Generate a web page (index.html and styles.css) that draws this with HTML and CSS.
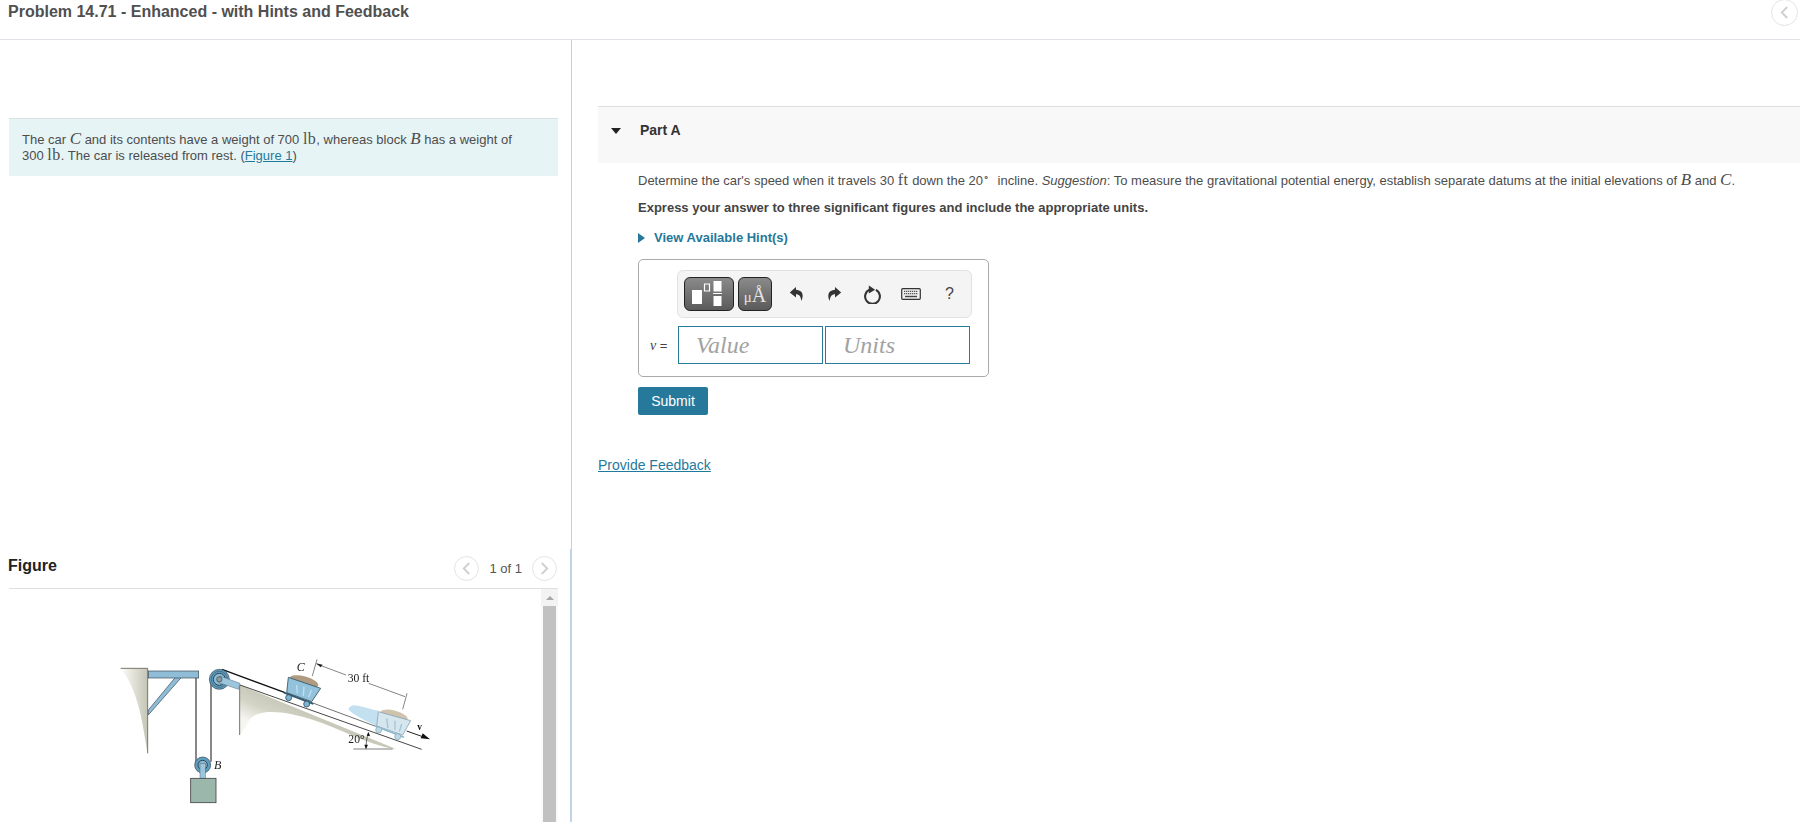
FILE: index.html
```html
<!DOCTYPE html>
<html lang="en">
<head>
<meta charset="utf-8">
<title>Problem 14.71</title>
<link rel="stylesheet" href="styles.css">
</head>
<body>
<header class="topbar">
  <h1 class="title">Problem 14.71 - Enhanced - with Hints and Feedback</h1>
  <span class="circle circle-top"><svg class="chev" viewBox="0 0 12 16"><path d="M9 2 3 8l6 6"/></svg></span>
</header>
<main class="split">
  <section class="left">
    <div class="intro">The car <i class="m">C</i> and its contents have a weight of 700 <span class="u">lb</span>, whereas block <i class="m">B</i> has a weight of<br>300 <span class="u">lb</span>. The car is released from rest. (<a class="link" href="#">Figure 1</a>)</div>
    <div class="fighead">
      <h2 class="figtitle">Figure</h2>
      <div class="pager">
        <span class="circle"><svg class="chev" viewBox="0 0 12 16"><path d="M9 2 3 8l6 6"/></svg></span>
        <span class="pagecount">1 of 1</span>
        <span class="circle"><svg class="chev" viewBox="0 0 12 16"><path d="M3 2l6 6-6 6"/></svg></span>
      </div>
    </div>
    <div class="figbody">
      <div class="figscroll">
        <svg class="diagram" viewBox="0 0 1020 516" width="340" height="172">
          <defs>
            <linearGradient id="wall" x1="0" x2="1" y1="0" y2="0"><stop offset="0" stop-color="#fff"/><stop offset=".45" stop-color="#e4e4da"/><stop offset="1" stop-color="#c4c4b6"/></linearGradient>
            <linearGradient id="ground" gradientUnits="userSpaceOnUse" x1="620" y1="160" x2="570" y2="270"><stop offset="0" stop-color="#c4c4b4"/><stop offset=".55" stop-color="#d2d2c5"/><stop offset="1" stop-color="#f6f6f1"/></linearGradient>
          </defs>
          <path d="M60 55H143V310C128 230 118 120 60 55Z" fill="url(#wall)"/>
          <path d="M62 55H143V310" fill="none" stroke="#77776f" stroke-width="3"/>
          <path d="M420 105 890 298C800 285 720 235 640 210 560 185 470 170 445 215 435 235 428 245 420 255Z" fill="url(#ground)"/>
          <path d="M419 105V255" stroke="#555" stroke-width="2.500"/>
          <path d="M145 180 236 70 248 78 145 195Z" fill="#8fbcd6" stroke="#3b4a55" stroke-width="2"/>
          <rect x="145" y="63" width="151" height="21" fill="#8fbcd6" stroke="#3b4a55" stroke-width="2"/>
          <path d="M288 84V335M333 90V335" stroke="#111" stroke-width="3" fill="none"/>
          <path d="M366 58 555 128" stroke="#111" stroke-width="4"/>
          <path d="M420 105 965 298" stroke="#222" stroke-width="2.500"/>
          <path d="M555 128 835 232" stroke="#555" stroke-width="2.500"/>
          <circle cx="358" cy="88" r="30" fill="#5f9dbf" stroke="#2e4552" stroke-width="2"/>
          <circle cx="358" cy="88" r="24" fill="none" stroke="#2e4552" stroke-width="1.500"/>
          <circle cx="358" cy="88" r="18" fill="#8bbad4" stroke="#2e4552" stroke-width="3"/>
          <path d="M360 78 420 100 416 118 356 98Z" fill="#9cc6dc" stroke="#567" stroke-width="1.500"/>
          <circle cx="358" cy="88" r="8" fill="#8d9aa0" stroke="#2e4552" stroke-width="2"/>
          <path d="M745 178C755 155 775 170 835 182L830 228C800 215 760 195 745 178Z" fill="#c2e0f0"/>
          <ellipse cx="882" cy="197" rx="42" ry="15" fill="#cfc3ae" transform="rotate(15 882 197)"/>
          <path d="M835 185 932 212 908 255 830 228Z" fill="#d6e6ef" stroke="#8aa3b2" stroke-width="2.500"/>
          <path d="M860 205 864 235M885 212 885 240M905 222 898 245" stroke="#a4c4d6" stroke-width="4" fill="none"/>
          <path d="M825 228 912 262" stroke="#8cb7cf" stroke-width="5"/>
          <circle cx="836" cy="240" r="9" fill="#bcd9e8" stroke="#8aa3b2" stroke-width="2"/>
          <circle cx="893" cy="260" r="9" fill="#bcd9e8" stroke="#8aa3b2" stroke-width="2"/>
          <ellipse cx="612" cy="95" rx="44" ry="16" fill="#b09a80" transform="rotate(15 612 95)"/>
          <path d="M565 82 662 115 635 155 560 128Z" fill="#93c2dc" stroke="#33505f" stroke-width="2.500"/>
          <path d="M590 105 592 130M612 110 610 138M634 120 626 142" stroke="#c3dfee" stroke-width="4" fill="none"/>
          <path d="M552 128 640 162" stroke="#2d5a70" stroke-width="5"/>
          <circle cx="566" cy="143" r="9" fill="#7db5d3" stroke="#234" stroke-width="2"/>
          <circle cx="620" cy="162" r="9" fill="#7db5d3" stroke="#234" stroke-width="2"/>
          <path d="M651 28 637 78M650 42 738 75M806 100 915 140M921 130 908 178" stroke="#333" stroke-width="1.800" fill="none"/>
          <path d="M648 40 668 44 662 52Z" fill="#222"/>
          <path d="M920 243 965 259" stroke="#222" stroke-width="3"/>
          <path d="M990 268 962 265 968 250Z" fill="#111"/>
          <path d="M760 297H878" stroke="#666" stroke-width="2.500"/>
          <path d="M805 248C800 265 798 280 798 296" stroke="#222" stroke-width="2" fill="none"/>
          <path d="M798 297 793 284H804ZM806 246 810 259 800 257Z" fill="#111"/>
          <circle cx="308" cy="345" r="24" fill="#5f9dbf" stroke="#2e4552" stroke-width="2"/>
          <circle cx="308" cy="345" r="14" fill="#8bbad4" stroke="#2e4552" stroke-width="3"/>
          <rect x="300" y="340" width="16" height="46" fill="#9cc6dc" stroke="#567" stroke-width="1.500"/>
          <rect x="272" y="385" width="76" height="73" fill="#9bb7ab" stroke="#444" stroke-width="2.500"/>
          <text class="fig-label" x="590" y="63">C</text>
          <text class="fig-label" x="342" y="358">B</text>
          <text class="fig-dim" x="743" y="97">30 ft</text>
          <text class="fig-dim" x="745" y="280">20°</text>
          <text class="fig-vec" x="952" y="241">v</text>
        </svg>
      </div>
      <div class="scrollbar">
        <span class="scroll-up"></span>
        <span class="scroll-thumb"></span>
      </div>
    </div>
  </section>
  <div class="rule"><span class="rule-top"></span><span class="rule-bottom"></span></div>
  <section class="right">
    <div class="parthead"><span class="tri-down"></span><span class="partname">Part A</span></div>
    <div class="partbody">
      <p class="para">Determine the car's speed when it travels 30 <span class="u">ft</span> down the 20<sup class="deg">∘</sup> incline. <em>Suggestion</em>: To measure the gravitational potential energy, establish separate datums at the initial elevations of <i class="m">B</i> and <i class="m">C</i>.</p>
      <p class="para strong">Express your answer to three significant figures and include the appropriate units.</p>
      <div class="hint"><span class="tri-right"></span>View Available Hint(s)</div>
      <div class="answer">
        <div class="toolbar">
          <button class="tbtn tbtn-wide" type="button"><svg width="48" height="32" viewBox="0 0 48 32"><path fill="#fff" d="M7 12h10v14H7zM28.500 3h8v10.500h-8zM28.500 18h8v10h-8z"/><path d="M19.500 6h5v7h-5z" fill="none" stroke="#fff" stroke-width="1.200"/><path d="M28 15.500h9" stroke="#fff" stroke-width="1"/></svg></button>
          <button class="tbtn tbtn-unit" type="button"><span class="mu">μ</span><span class="ang">Å</span></button>
          <svg class="ticon undo" viewBox="0 0 16 16"><path d="M7 1 .8 6.500 7 11.500V8.300c3.300 0 4.800 2 5.300 6.700 2.700-5.300 1.700-10.800-5.300-11.200Z"/></svg>
          <svg class="ticon redo" viewBox="0 0 16 16"><path d="M9 1l6.200 5.500L9 11.500V8.300C5.700 8.300 4.200 10.300 3.700 15 1 9.700 2 4.200 9 3.800Z"/></svg>
          <svg class="ticon reset" viewBox="0 0 18 18"><path class="arc" d="M5.800 4.600a7 7 0 1 0 6.400 0"/><path d="M5.500 0.500 11.500 4.500 5.500 8Z"/></svg>
          <svg class="ticon keys" viewBox="0 0 20 12"><rect x=".7" y=".7" width="18.600" height="10.600" rx="1" fill="#eee" stroke="#333" stroke-width="1.200"/><path d="M3 3.300h14M3 5.600h14" stroke="#555" stroke-width="1.300" stroke-dasharray="1.300 .7"/><path d="M4 8.500h12" stroke="#444" stroke-width="1.400"/></svg>
          <span class="help">?</span>
        </div>
        <div class="inputs">
          <span class="varlabel"><i class="m">v</i> =</span>
          <span class="field">Value</span>
          <span class="field">Units</span>
        </div>
      </div>
      <button class="submit" type="button">Submit</button>
    </div>
    <a class="link feedback" href="#">Provide Feedback</a>
  </section>
</main>
</body>
</html>
```
FILE: styles.css
```css
* { box-sizing: border-box; }
html, body { margin: 0; height: 822px; overflow: hidden; background: #fff; }
body { font-family: "Liberation Sans", Arial, sans-serif; font-size: 13px; color: #4a4a4a; display: flex; flex-direction: column; }

.topbar { height: 40px; flex: none; border-bottom: 1px solid #dfe2e6; padding-left: 8px; display: flex; justify-content: space-between; align-items: flex-start; }
.title { margin: 3px 0 0; font-size: 16px; line-height: 18px; font-weight: 700; color: #505050; }

.circle { width: 25px; height: 25px; border-radius: 50%; border: 1px solid #e4e4e4; display: flex; align-items: center; justify-content: center; background: #fff; flex: none; }
.circle-top { width: 27px; height: 27px; margin: 0 2px 0 0; transform: translateY(-1px); }
.chev { width: 11px; height: 15px; fill: none; stroke: #cfcfcf; stroke-width: 2; }

.split { flex: 1; min-height: 0; display: flex; }
.left { width: 570px; flex: none; display: flex; flex-direction: column; padding: 78px 12px 0 9px; }
.rule { width: 2px; flex: none; display: flex; flex-direction: column; align-items: flex-end; }
.rule-top { width: 1px; height: 509px; background: #c3cfdd; }
.rule-bottom { width: 2px; flex: 1; background: #c3d2e6; }
.right { flex: 1; min-width: 0; padding: 66px 0 0 26px; }

.intro { height: 58px; background: #e6f4f6; border-top: 1px solid #d8e2e6; padding: 13px 10px 0 13px; line-height: 16px; color: #4d4d4d; white-space: nowrap; }
.m { font-family: "Liberation Serif", serif; font-style: italic; font-size: 17px; line-height: 0; }
.u { font-family: "Liberation Serif", serif; font-size: 16px; letter-spacing: .5px; line-height: 0; }
.link { color: #1f7a9c; text-decoration: underline; }

.fighead { height: 413px; flex: none; display: flex; justify-content: space-between; align-items: flex-end; border-bottom: 1px solid #dde0e3; padding-bottom: 7px; }
.figtitle { margin: 0 0 5px; font-size: 16px; line-height: 20px; font-weight: 700; color: #222; transform: translateX(-1px); }
.pager { display: flex; align-items: center; gap: 10px; margin-right: 1px; }
.pagecount { color: #555; font-size: 13px; }

.figbody { flex: 1; min-height: 0; display: flex; }
.figscroll { flex: 1; padding: 61px 0 0 91px; }
.diagram { display: block; filter: blur(.4px); }
.fig-label { font: italic 36px "Liberation Serif", serif; fill: #222; }
.fig-dim { font: 35px "Liberation Serif", serif; fill: #222; }
.fig-vec { font: 700 28px "Liberation Serif", serif; fill: #111; }

.scrollbar { width: 17px; flex: none; display: flex; flex-direction: column; align-items: center; background: #f9f9f9; }
.scroll-up { width: 17px; height: 17px; flex: none; display: flex; align-items: center; justify-content: center; background: #f3f3f3; }
.scroll-up::before { content: ""; border: 4px solid transparent; border-top-width: 0; border-bottom: 4px solid #a8a8a8; }
.scroll-thumb { width: 13px; flex: 1; background: #c1c1c1; }

.parthead { height: 57px; background: #f8f8f8; border-top: 1px solid #dedede; display: flex; align-items: flex-start; padding: 15px 0 0 13px; }
.tri-down { width: 0; height: 0; margin-top: 6px; border-left: 5.500px solid transparent; border-right: 5.500px solid transparent; border-top: 6px solid #222; }
.partname { margin-left: 19px; font-size: 14px; font-weight: 700; color: #333; line-height: 16px; }

.partbody { padding: 10px 0 0 40px; }
.para { margin: 0 0 11px; line-height: 16px; color: #4d4d4d; white-space: nowrap; }
.para.strong { font-weight: 700; color: #444; margin-bottom: 14px; }
.deg { font-size: 10px; line-height: 0; font-family: "Liberation Serif", serif; margin-right: 5px; }

.hint { font-weight: 700; color: #25789a; line-height: 16px; display: flex; align-items: center; }
.tri-right { width: 0; height: 0; margin-right: 9px; border-top: 5px solid transparent; border-bottom: 5px solid transparent; border-left: 7px solid #25789a; }

.answer { width: 351px; height: 118px; margin-top: 13px; border: 1px solid #aaa; border-radius: 5px; padding: 10px 0 0 38px; }
.toolbar { width: 295px; height: 48px; background: #f4f4f4; border: 1px solid #e2e2e2; border-radius: 6px; display: flex; align-items: center; padding-left: 6px; }
.tbtn { height: 34px; padding: 0; border: 1px solid #222; border-radius: 6px; background: linear-gradient(#8a8a8a, #5a5a5a); display: flex; align-items: center; justify-content: center; }
.tbtn-wide { width: 50px; }
.tbtn-unit { width: 34px; margin-left: 4px; color: #e4e4e4; font-family: "Liberation Serif", serif; align-items: flex-end; padding-bottom: 4px; }
.mu { font-size: 15px; line-height: 17px; }
.ang { font-size: 20px; line-height: 21px; }
.ticon { fill: #333; flex: none; }
.undo, .redo { width: 16px; height: 16px; }
.undo { margin-left: 17px; }
.redo { margin-left: 21px; }
.reset { width: 19px; height: 19px; margin-left: 21px; }
.arc { fill: none; stroke: #333; stroke-width: 2; }
.keys { width: 20px; height: 12px; margin-left: 19px; }
.help { margin-left: 24px; font-size: 16px; color: #444; }

.inputs { display: flex; align-items: center; margin: 8px 0 0 -27px; }
.varlabel { width: 28px; flex: none; font-size: 13px; color: #444; white-space: nowrap; }
.varlabel .m { font-size: 14px; }
.field { width: 145px; height: 38px; flex: none; border: 1px solid #2a7a9b; font: italic 24px/36px "Liberation Serif", serif; color: #a2a2a2; padding-left: 17px; margin-right: 2px; }

.submit { display: block; width: 70px; height: 28px; margin-top: 10px; padding: 0; border: 0; border-radius: 2px; background: #27799b; color: #fff; font: 14px "Liberation Sans", Arial, sans-serif; }
.feedback { display: inline-block; margin-top: 42px; font-size: 14px; line-height: 16px; }
```
